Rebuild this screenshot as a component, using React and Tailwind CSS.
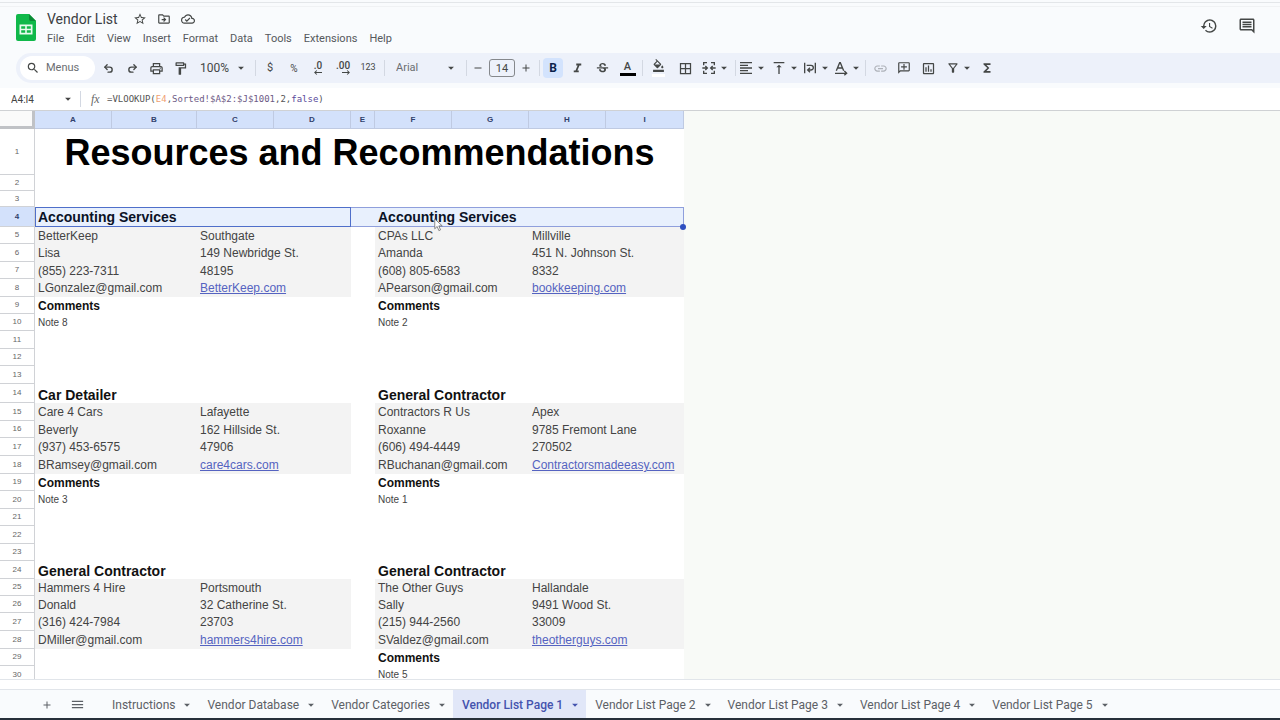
import { Redo2, Undo2 } from "lucide-react";
import {
  MdAdd,
  MdArrowDropDown,
  MdBorderAll,
  MdFormatAlignLeft,
  MdFormatColorFill,
  MdFormatItalic,
  MdFunctions,
  MdHistory,
  MdLink,
  MdMenu,
  MdOutlineAddComment,
  MdOutlineCloudDone,
  MdOutlineDriveFileMove,
  MdOutlineFilterAlt,
  MdOutlineFormatPaint,
  MdOutlineInsertChart,
  MdOutlineInsertComment,
  MdOutlinePrint,
  MdRemove,
  MdSearch,
  MdStarBorder,
  MdStrikethroughS,
  MdVerticalAlignTop,
} from "react-icons/md";

const MENUS = ["File", "Edit", "View", "Insert", "Format", "Data", "Tools", "Extensions", "Help"];

const COLUMNS = [
  { name: "A", width: "w-[77px]" },
  { name: "B", width: "w-[85px]" },
  { name: "C", width: "w-[77px]" },
  { name: "D", width: "w-[77px]" },
  { name: "E", width: "w-[24px]" },
  { name: "F", width: "w-[77px]" },
  { name: "G", width: "w-[77px]" },
  { name: "H", width: "w-[77px]" },
  { name: "I", width: "w-[78px]" },
];

const SHORT = "h-[17px]";
const TALL = "h-[18px]";

const ROWS = [
  { n: 1, h: "h-[46px]", type: "title", text: "Resources and Recommendations" },
  { n: 2, h: "h-[16px]" },
  { n: 3, h: "h-[16px]" },
  { n: 4, h: "h-[20px]", type: "selected", left: ["Accounting Services"], right: ["Accounting Services"] },
  { n: 5, h: SHORT, type: "info", left: ["BetterKeep", "Southgate"], right: ["CPAs LLC", "Millville"] },
  { n: 6, h: TALL, type: "info", left: ["Lisa", "149 Newbridge St."], right: ["Amanda", "451 N. Johnson St."] },
  { n: 7, h: SHORT, type: "info", left: ["(855) 223-7311", "48195"], right: ["(608) 805-6583", "8332"] },
  { n: 8, h: TALL, type: "link", left: ["LGonzalez@gmail.com", "BetterKeep.com"], right: ["APearson@gmail.com", "bookkeeping.com"] },
  { n: 9, h: SHORT, type: "label", left: ["Comments"], right: ["Comments"] },
  { n: 10, h: SHORT, type: "note", left: ["Note 8"], right: ["Note 2"] },
  { n: 11, h: TALL },
  { n: 12, h: SHORT },
  { n: 13, h: TALL },
  { n: 14, h: "h-[19px]", type: "heading", left: ["Car Detailer"], right: ["General Contractor"] },
  { n: 15, h: TALL, type: "info", left: ["Care 4 Cars", "Lafayette"], right: ["Contractors R Us", "Apex"] },
  { n: 16, h: SHORT, type: "info", left: ["Beverly", "162 Hillside St."], right: ["Roxanne", "9785 Fremont Lane"] },
  { n: 17, h: TALL, type: "info", left: ["(937) 453-6575", "47906"], right: ["(606) 494-4449", "270502"] },
  { n: 18, h: TALL, type: "link", left: ["BRamsey@gmail.com", "care4cars.com"], right: ["RBuchanan@gmail.com", "Contractorsmadeeasy.com"] },
  { n: 19, h: SHORT, type: "label", left: ["Comments"], right: ["Comments"] },
  { n: 20, h: TALL, type: "note", left: ["Note 3"], right: ["Note 1"] },
  { n: 21, h: SHORT },
  { n: 22, h: TALL },
  { n: 23, h: SHORT },
  { n: 24, h: TALL, type: "heading", left: ["General Contractor"], right: ["General Contractor"] },
  { n: 25, h: SHORT, type: "info", left: ["Hammers 4 Hire", "Portsmouth"], right: ["The Other Guys", "Hallandale"] },
  { n: 26, h: SHORT, type: "info", left: ["Donald", "32 Catherine St."], right: ["Sally", "9491 Wood St."] },
  { n: 27, h: TALL, type: "info", left: ["(316) 424-7984", "23703"], right: ["(215) 944-2560", "33009"] },
  { n: 28, h: TALL, type: "link", left: ["DMiller@gmail.com", "hammers4hire.com"], right: ["SValdez@gmail.com", "theotherguys.com"] },
  { n: 29, h: SHORT, type: "label", left: [""], right: ["Comments"] },
  { n: 30, h: TALL, type: "note", left: [""], right: ["Note 5"] },
];

const TABS = [
  "Instructions",
  "Vendor Database",
  "Vendor Categories",
  "Vendor List Page 1",
  "Vendor List Page 2",
  "Vendor List Page 3",
  "Vendor List Page 4",
  "Vendor List Page 5",
];

const TEXT_STYLES = {
  heading: "text-[14px] leading-4 font-bold text-[#111] align-bottom",
  selected: "text-[14px] leading-4 font-bold text-[#0b1226] align-middle",
  label: "text-[12px] leading-4 font-bold text-[#111] align-middle",
  note: "text-[10px] leading-4 text-[#444] align-middle",
};

function SheetsLogo() {
  return (
    <svg viewBox="0 0 20 27" className="w-5 h-[27px]" aria-hidden="true">
      <path d="M2 0h11l7 7v18a2 2 0 0 1-2 2H2a2 2 0 0 1-2-2V2a2 2 0 0 1 2-2z" fill="#10b84a" />
      <path d="M13 0l7 7h-5a2 2 0 0 1-2-2z" fill="#0a8a35" />
      <path d="M3.5 10.500h13v10h-13z" fill="#e9fbef" />
      <path d="M5.200 12.200h4v2.500h-4zM10.800 12.200h4v2.500h-4zM5.200 16.300h4v2.500h-4zM10.800 16.300h4v2.500h-4z" fill="#10b84a" />
    </svg>
  );
}

function MergeIcon() {
  return (
    <svg viewBox="0 0 24 24" className="size-4" fill="none" stroke="currentColor" strokeWidth="2" aria-hidden="true">
      <path d="M9 4H4v4M4 16v4h5M15 4h5v4M20 16v4h-5M2 12h7M6.500 9l3 3-3 3M22 12h-7M17.500 9l-3 3 3 3" />
    </svg>
  );
}

function WrapIcon() {
  return (
    <svg viewBox="0 0 24 24" className="size-4" fill="none" stroke="currentColor" strokeWidth="2" aria-hidden="true">
      <path d="M4 4v16M20 4v16M7 8h6.500a3.500 3.500 0 0 1 0 7H9M12 11.500L8.500 15l3.500 3.500" />
    </svg>
  );
}

function RotateIcon() {
  return (
    <svg viewBox="0 0 24 24" className="size-4" fill="none" stroke="currentColor" strokeWidth="2" aria-hidden="true">
      <path d="M5 16l5-12h1l5 12M7 12h7M3 20h17M17 16.500l3.500 3.500-3.500 3" />
    </svg>
  );
}

function DecimalIcon({ digits, direction }) {
  return (
    <span className="flex flex-col items-center font-medium text-[10px] leading-[9px]">
      {digits}
      <svg viewBox="0 0 10 5" className="w-[8px] h-[5px] self-end" fill="none" stroke="currentColor" aria-hidden="true">
        <path d={direction === "left" ? "M10 2.500H1M3.500 0L1 2.500 3.500 5" : "M0 2.500h9M6.500 0L9 2.500 6.500 5"} strokeWidth="1.300" />
      </svg>
    </span>
  );
}

function ToolButton({ label, width = "w-6", className = "", caret = false, children }) {
  return (
    <button
      type="button"
      aria-label={label}
      className={`${width} h-5 shrink-0 flex items-center justify-center rounded-sm ${className}`}
    >
      {children}
      {caret && <MdArrowDropDown className="size-[14px] shrink-0" />}
    </button>
  );
}

function Divider({ className = "" }) {
  return <span className={`w-px h-4 shrink-0 bg-[#d3d8e2] ${className}`} />;
}

function TitleBar() {
  return (
    <header className="h-[46px] flex items-start pl-4 pr-6">
      <div className="pt-[7px]">
        <SheetsLogo />
      </div>
      <div className="flex-1 pl-[11px] pt-[2px]">
        <div className="flex items-center h-5">
          <h1 className="text-[14px] leading-5 text-[#3c4043]">Vendor List</h1>
          <button type="button" aria-label="Star" className="ml-[15px]">
            <MdStarBorder className="size-[14px]" />
          </button>
          <button type="button" aria-label="Move" className="ml-[10px]">
            <MdOutlineDriveFileMove className="size-[14px]" />
          </button>
          <button type="button" aria-label="Document status" className="ml-[10px]">
            <MdOutlineCloudDone className="size-[14px]" />
          </button>
        </div>
        <nav className="flex gap-3 pt-px text-[11px] leading-[18px] text-[#55585c]">
          {MENUS.map((menu) => (
            <button key={menu} type="button">
              {menu}
            </button>
          ))}
        </nav>
      </div>
      <div className="flex gap-5 pt-[10px] text-[#444746]">
        <button type="button" aria-label="Version history">
          <MdHistory className="size-[18px]" />
        </button>
        <button type="button" aria-label="Comments">
          <MdOutlineInsertComment className="size-[18px]" />
        </button>
      </div>
    </header>
  );
}

function Toolbar() {
  return (
    <div className="ml-4 h-[30px] flex items-center bg-[#edf1fa] rounded-l-full text-[#444746]">
      <label className="ml-1 w-[75px] h-6 flex items-center shrink-0 rounded-full bg-white pl-[6px]">
        <MdSearch className="size-[14px] shrink-0" />
        <input
          aria-label="Search the menus"
          placeholder="Menus"
          className="w-full min-w-0 pl-[6px] text-[11px] bg-transparent outline-none placeholder:text-[#6b6e72]"
        />
      </label>
      <ToolButton label="Undo" className="ml-px"><Undo2 className="size-[11px]" strokeWidth={3} /></ToolButton>
      <ToolButton label="Redo"><Redo2 className="size-[11px]" strokeWidth={3} /></ToolButton>
      <ToolButton label="Print"><MdOutlinePrint className="size-[15px]" /></ToolButton>
      <ToolButton label="Paint format"><MdOutlineFormatPaint className="size-[15px]" /></ToolButton>
      <label className="ml-2 w-[48px] flex items-center justify-between shrink-0">
        <select aria-label="Zoom" defaultValue="100%" className="appearance-none w-[34px] text-[12px] outline-none">
          <option>100%</option>
        </select>
        <MdArrowDropDown className="size-[14px] shrink-0" />
      </label>
      <Divider className="ml-[7px]" />
      <ToolButton label="Currency" className="ml-[2px] text-[11px]">$</ToolButton>
      <ToolButton label="Percent" className="text-[10px]">%</ToolButton>
      <ToolButton label="Decrease decimals"><DecimalIcon digits=".0" direction="left" /></ToolButton>
      <ToolButton label="Increase decimals" width="w-[26px]"><DecimalIcon digits=".00" direction="right" /></ToolButton>
      <ToolButton label="More formats" className="text-[9px]">123</ToolButton>
      <Divider className="ml-1" />
      <label className="ml-[11px] w-[62px] flex items-center justify-between shrink-0 text-[#6b6e72]">
        <select aria-label="Font" defaultValue="Arial" className="appearance-none w-10 text-[11px] outline-none">
          <option>Arial</option>
        </select>
        <MdArrowDropDown className="size-[14px] shrink-0 text-[#444746]" />
      </label>
      <Divider className="ml-2" />
      <ToolButton label="Decrease font size" width="w-[22px]"><MdRemove className="size-3" /></ToolButton>
      <input
        aria-label="Font size"
        defaultValue="14"
        className="w-[26px] h-[18px] shrink-0 rounded-[3px] border border-[#85888c] text-center text-[11px] outline-none"
      />
      <ToolButton label="Increase font size" width="w-[22px]"><MdAdd className="size-3" /></ToolButton>
      <Divider className="ml-[2px]" />
      <ToolButton label="Bold" width="w-5" className="ml-[3px] bg-[#d3e3fd] text-[12px] font-bold text-[#0b1f4b]">B</ToolButton>
      <ToolButton label="Italic" width="w-7"><MdFormatItalic className="size-[15px]" /></ToolButton>
      <ToolButton label="Strikethrough" width="w-[22px]"><MdStrikethroughS className="size-[15px]" /></ToolButton>
      <ToolButton label="Text color" width="w-[29px]">
        <span className="w-4 border-b-[3px] border-black text-[11px] leading-[12px] font-medium">A</span>
      </ToolButton>
      <Divider />
      <ToolButton label="Fill color" width="w-[30px]">
        <span className="pb-[2px] border-b-[3px] border-white"><MdFormatColorFill className="size-[13px]" /></span>
      </ToolButton>
      <ToolButton label="Borders" width="w-6"><MdBorderAll className="size-[15px]" /></ToolButton>
      <ToolButton label="Merge cells" width="w-[38px]" caret><MergeIcon /></ToolButton>
      <Divider />
      <ToolButton label="Horizontal align" width="w-[34px]" caret><MdFormatAlignLeft className="size-4" /></ToolButton>
      <ToolButton label="Vertical align" width="w-[31px]" caret><MdVerticalAlignTop className="size-4" /></ToolButton>
      <ToolButton label="Text wrapping" width="w-[31px]" caret><WrapIcon /></ToolButton>
      <ToolButton label="Text rotation" width="w-[32px]" caret><RotateIcon /></ToolButton>
      <Divider className="ml-px" />
      <ToolButton label="Insert link" className="ml-[2px] text-[#adb1b8]"><MdLink className="size-[15px]" /></ToolButton>
      <ToolButton label="Insert comment"><MdOutlineAddComment className="size-[14px] -scale-x-100" /></ToolButton>
      <ToolButton label="Insert chart"><MdOutlineInsertChart className="size-[15px]" /></ToolButton>
      <ToolButton label="Create a filter" width="w-[40px]" caret><MdOutlineFilterAlt className="size-[14px]" /></ToolButton>
      <ToolButton label="Functions" width="w-[14px]"><MdFunctions className="size-[14px]" /></ToolButton>
    </div>
  );
}

function FormulaBar() {
  return (
    <div className="mt-[5px] h-[23px] flex items-center bg-white border-b border-[#cfd1d4]">
      <input
        aria-label="Name box"
        defaultValue="A4:I4"
        className="w-[50px] shrink-0 pl-[11px] text-[10px] text-[#444] outline-none"
      />
      <MdArrowDropDown className="ml-[11px] size-[14px] text-[#444]" />
      <Divider className="ml-[5px]" />
      <span className="ml-[10px] w-[16px] font-['Liberation_Serif',serif] italic text-[12px] leading-4 text-[#666]">fx</span>
      <div
        role="textbox"
        aria-label="Formula"
        className="flex-1 pt-[2px] font-['DejaVu_Sans_Mono',monospace] text-[9px] text-[#555]"
      >
        =VLOOKUP(<span className="text-[#f0a070]">E4</span>,<span className="text-[#6d5a86]">Sorted!$A$2:$J$1001</span>,2,
        <span className="text-[#5a4a9a]">false</span>)
      </div>
    </div>
  );
}

function Cells({ row }) {
  const { type, left, right } = row;

  if (!type) {
    return <td colSpan={9} />;
  }

  if (type === "title") {
    return (
      <td colSpan={9} className="pt-[2px] text-center text-[36px] leading-[40px] font-bold text-black">
        {row.text}
      </td>
    );
  }

  if (type === "selected") {
    return (
      <>
        <td colSpan={4} className={`pl-[3px] bg-[#e8f0fd] shadow-[inset_0_0_0_1px_#4f6fca] ${TEXT_STYLES.selected}`}>
          {left[0]}
        </td>
        <td className="bg-[#e8f0fd] border-y border-[#8f9fdc]" />
        <td colSpan={4} className={`relative pl-[3px] bg-[#e8f0fd] border-y border-r border-[#8f9fdc] ${TEXT_STYLES.selected}`}>
          {right[0]}
          <span className="absolute -right-[3px] -bottom-[4px] size-[6px] rounded-full bg-[#2f4fc0]" />
          <svg viewBox="0 0 12 18" className="absolute left-[59px] top-[10px] z-10 w-[9px] h-[14px]" aria-hidden="true">
            <path d="M1 1v13l3.200-3 2.300 5.500 2.200-1L6.400 10.200H11z" fill="#fff" stroke="#666" />
          </svg>
        </td>
      </>
    );
  }

  if (type === "info" || type === "link") {
    return (
      <>
        <InfoCells values={left} link={type === "link"} />
        <td />
        <InfoCells values={right} link={type === "link"} />
      </>
    );
  }

  return (
    <>
      <td colSpan={4} className={`pl-[3px] ${TEXT_STYLES[type]}`}>{left[0]}</td>
      <td />
      <td colSpan={4} className={`pl-[3px] ${TEXT_STYLES[type]}`}>{right[0]}</td>
    </>
  );
}

function InfoCells({ values, link }) {
  const cell = "pl-[3px] bg-[#f3f3f3] text-[12px] leading-4 align-middle";

  return (
    <>
      <td colSpan={2} className={`${cell} text-[#444]`}>{values[0]}</td>
      <td colSpan={2} className={`${cell} text-[#444]`}>
        {link ? (
          <a href="#" className="underline text-[#5563c1]">{values[1]}</a>
        ) : (
          values[1]
        )}
      </td>
    </>
  );
}

function Sheet() {
  return (
    <main className="flex-1 min-h-0 overflow-hidden bg-[#f8faf7] font-['Liberation_Sans',Arial,sans-serif]">
      <table className="w-[684px] table-fixed border-separate border-spacing-0 bg-white whitespace-nowrap">
        <thead>
          <tr className="h-[18px] text-[8px] leading-[12px] text-[#30406b]">
            <th aria-label="Select all" className="w-[35px] p-0 bg-[#fafafa] border-r-[3px] border-b-[3px] border-[#c0c2c6]" />
            {COLUMNS.map((column) => (
              <th key={column.name} className={`${column.width} p-0 bg-[#d3e1fb] border-r border-b border-[#bfcae2]`}>
                {column.name}
              </th>
            ))}
          </tr>
        </thead>
        <tbody>
          {ROWS.map((row) => (
            <tr key={row.n} className={row.h}>
              <th
                className={`p-0 border-r border-b border-[#d0d2d6] text-[8px] leading-[12px] ${
                  row.n === 4 ? "bg-[#d3e1fb] font-bold text-[#30406b]" : "font-normal text-[#666]"
                }`}
              >
                {row.n}
              </th>
              <Cells row={row} />
            </tr>
          ))}
        </tbody>
      </table>
    </main>
  );
}

function SheetTabs() {
  return (
    <footer>
      <div className="h-[11px] bg-white border-y border-[#e1e5ea]" />
      <div className="h-7 flex items-stretch pl-[35px] text-[12px] text-[#5c6066]">
        <button type="button" aria-label="Add sheet" className="w-6 pt-px flex items-center justify-center">
          <MdAdd className="size-3" />
        </button>
        <button type="button" aria-label="All sheets" className="ml-[6px] w-6 pt-px flex items-center justify-center">
          <MdMenu className="size-[15px]" />
        </button>
        <div className="ml-[14px] flex">
          {TABS.map((tab) => (
            <button
              key={tab}
              type="button"
              className={`flex items-center gap-[5px] pt-px pl-[9px] pr-[4px] whitespace-nowrap ${
                tab === "Vendor List Page 1" ? "bg-[#e1e7f8] font-medium text-[#4453ae]" : ""
              }`}
            >
              {tab}
              <MdArrowDropDown className="size-[14px] shrink-0" />
            </button>
          ))}
        </div>
      </div>
      <div className="h-[2px] bg-[#27303a]" />
    </footer>
  );
}

export default function App() {
  return (
    <div className="h-screen flex flex-col overflow-hidden bg-[#f9fbfd] font-['Roboto',sans-serif] text-[#444746]">
      <div className="h-[7px] shrink-0 pt-[2px] flex flex-col justify-between">
        <div className="h-px bg-[#e3e6e9]" />
        <div className="h-px bg-[#f0f2f4]" />
      </div>
      <TitleBar />
      <Toolbar />
      <FormulaBar />
      <Sheet />
      <SheetTabs />
    </div>
  );
}
